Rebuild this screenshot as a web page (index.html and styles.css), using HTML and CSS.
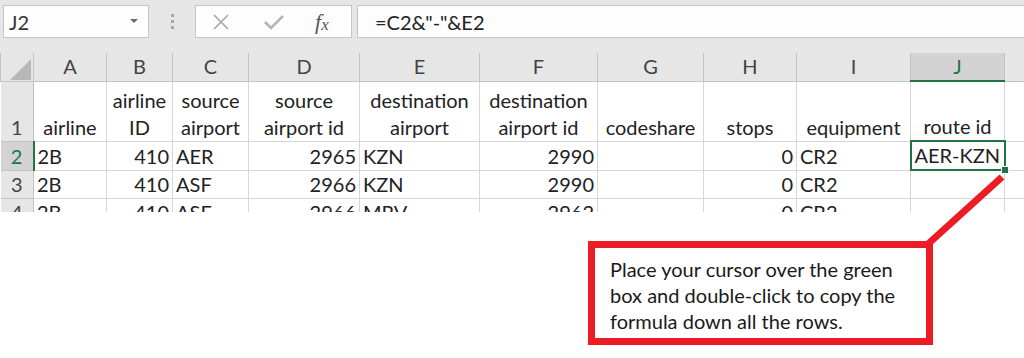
FILE: index.html
```html
<!DOCTYPE html>
<html lang="en">
  <head>
    <meta charset="UTF-8" />
    <meta name="viewport" content="width=device-width, initial-scale=1.0" />
    <title>Route id formula</title>
    <link rel="stylesheet" href="styles.css">
  </head>
  <body>
    <div class="app">
      <div class="toolbar">
        <div class="namebox">
          <span>J2</span>
          <svg class="drop" width="8" height="5" viewBox="0 0 8 5"><path d="M0 0 L8 0 L4 4 Z" fill="#6a6a6a"/></svg>
        </div>
        <div class="grip"><i></i><i></i><i></i></div>
        <div class="fxbox">
          <svg class="btn" width="16" height="16" viewBox="0 0 16 16"><path d="M1 1 L15 15 M15 1 L1 15" stroke="#a6a6a6" stroke-width="1.6" fill="none"/></svg>
          <svg class="btn" width="20" height="16" viewBox="0 0 20 16"><path d="M1 8 L7 14 L19 2" stroke="#b4b4b4" stroke-width="2.6" fill="none"/></svg>
          <span class="fx">f<sub>x</sub></span>
        </div>
        <div class="formula">=C2&amp;"-"&amp;E2</div>
      </div>

      <div class="sheet">
        <table class="grid">
          <colgroup>
            <col style="width: 33px">
            <col style="width: 73px">
            <col style="width: 66px">
            <col style="width: 76px">
            <col style="width: 111px">
            <col style="width: 120px">
            <col style="width: 118px">
            <col style="width: 106px">
            <col style="width: 93px">
            <col style="width: 114px">
            <col style="width: 94px">
            <col style="width: 64px">
          </colgroup>
          <tr class="heads">
            <th class="corner">
              <svg width="21" height="21" viewBox="0 0 21 21"><path d="M21 0 L21 21 L0 21 Z" fill="#b7b7b7"/></svg>
            </th>
            <th>A</th><th>B</th><th>C</th><th>D</th><th>E</th><th>F</th>
            <th>G</th><th>H</th><th>I</th><th class="sel">J</th><th>K</th>
          </tr>
          <tr class="tall">
            <th class="rh">1</th>
            <td class="c">airline</td>
            <td class="c">airline<br>ID</td>
            <td class="c">source<br>airport</td>
            <td class="c">source<br>airport id</td>
            <td class="c">destination<br>airport</td>
            <td class="c">destination<br>airport id</td>
            <td class="c">codeshare</td>
            <td class="c">stops</td>
            <td class="c">equipment</td>
            <td class="c">route id</td>
            <td></td>
          </tr>
          <tr>
            <th class="rh sel">2</th>
            <td>2B</td><td class="n">410</td><td>AER</td><td class="n">2965</td><td>KZN</td>
            <td class="n">2990</td><td></td><td class="n">0</td><td>CR2</td>
            <td class="active">AER-KZN<span class="handle"></span></td><td></td>
          </tr>
          <tr>
            <th class="rh">3</th>
            <td>2B</td><td class="n">410</td><td>ASF</td><td class="n">2966</td><td>KZN</td>
            <td class="n">2990</td><td></td><td class="n">0</td><td>CR2</td>
            <td></td><td></td>
          </tr>
          <tr>
            <th class="rh">4</th>
            <td>2B</td><td class="n">410</td><td>ASF</td><td class="n">2966</td><td>MRV</td>
            <td class="n">2962</td><td></td><td class="n">0</td><td>CR2</td>
            <td></td><td></td>
          </tr>
        </table>
      </div>

      <svg class="pointer" width="1024" height="358" viewBox="0 0 1024 358">
        <line x1="1002" y1="177" x2="928" y2="244" stroke="#ed1c24" stroke-width="7"/>
      </svg>
      <div class="callout">
        Place your cursor over the green<br>
        box and double-click to copy the<br>
        formula down all the rows.
      </div>
    </div>
  </body>
</html>
```

FILE: styles.css
```css
body {
  margin: 0;
  background: #ffffff;
  font-family: Lato, "Liberation Sans", sans-serif;
  color: #222;
}

.app {
  position: relative;
  width: 1024px;
  height: 358px;
  overflow: hidden;
}

/* formula bar */
.toolbar {
  display: flex;
  align-items: flex-start;
  height: 53px;
  box-sizing: border-box;
  padding: 5px 0 0 3px;
  background: #e6e6e6;
}

.namebox,
.fxbox,
.formula {
  height: 33px;
  box-sizing: border-box;
  background: #fdfdfd;
  border: 1px solid #c6c6c6;
  display: flex;
  align-items: center;
}

.namebox {
  width: 146px;
  padding: 0 10px 0 5px;
  justify-content: space-between;
  font-size: 20px;
  color: #333;
}

.grip {
  width: 46px;
  height: 33px;
  display: flex;
  flex-direction: column;
  align-items: center;
  justify-content: center;
  gap: 3px;
}

.grip i {
  width: 3px;
  height: 3px;
  background: #a8a8a8;
}

.fxbox {
  width: 157px;
  padding: 0 0 0 17px;
  gap: 0;
}

.fxbox .btn:nth-child(1) {
  margin-right: 35px;
}

.fxbox .btn:nth-child(2) {
  margin-right: 31px;
}

.fx {
  font-family: "Liberation Serif", serif;
  font-style: italic;
  font-size: 22px;
  color: #555;
}

.fx sub {
  font-size: 17px;
  vertical-align: -1px;
}

.formula {
  flex: 1;
  margin: 0 -2px 0 5px;
  padding-left: 17px;
  font-size: 20px;
  color: #222;
}

/* sheet */
.sheet {
  height: 159px;
  overflow: hidden;
}

.grid {
  border-collapse: collapse;
  table-layout: fixed;
  width: 1068px;
  font-size: 20px;
}

.grid th,
.grid td {
  border: 1px solid #d6d6d6;
  padding: 0 3px;
  white-space: nowrap;
  overflow: hidden;
  line-height: 27px;
  vertical-align: bottom;
}

.grid td {
  text-align: left;
}

.grid td.n {
  text-align: right;
}

.grid td.c {
  text-align: center;
}

.heads th {
  height: 27px;
  background: #e6e6e6;
  border: 1px solid #c4c4c4;
  border-top: none;
  font-weight: normal;
  color: #444;
  vertical-align: middle;
}

.heads .corner {
  padding: 0 2px 0 0;
  text-align: right;
  vertical-align: bottom;
  line-height: 0;
}

.heads .corner svg {
  margin-bottom: 1px;
}

.heads th.sel {
  background: #d3d3d3;
  color: #217346;
  border-bottom: 2px solid #217346;
}

.grid .rh {
  background: #e6e6e6;
  border-color: #c4c4c4;
  border-left: none;
  font-weight: normal;
  color: #444;
  text-align: center;
  padding: 0;
}

.grid .rh.sel {
  background: #d3d3d3;
  color: #217346;
  border-right: 2px solid #217346;
}

.grid tr {
  height: 28px;
}

.grid tr.tall {
  height: 60px;
}

.grid td.active {
  position: relative;
  border: 2px solid #217346;
  overflow: visible;
}

.handle {
  position: absolute;
  right: -5px;
  bottom: -5px;
  width: 6px;
  height: 6px;
  background: #217346;
  border: 1px solid #fff;
}

/* annotation */
.pointer {
  position: absolute;
  left: 0;
  top: 0;
}

.callout {
  position: absolute;
  left: 588px;
  top: 241px;
  width: 345px;
  height: 104px;
  box-sizing: border-box;
  border: 7px solid #ed1c24;
  background: #fff;
  padding: 8px 0 0 15px;
  font-size: 20px;
  line-height: 26px;
  color: #1a1a1a;
}
```
